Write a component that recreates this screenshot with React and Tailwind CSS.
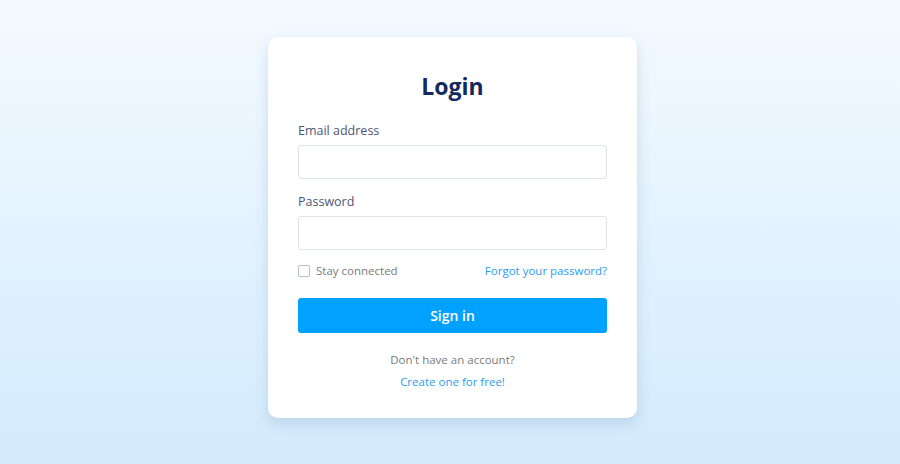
export default function App() {
  return (
    <div
      className="flex h-[464px] w-full items-start justify-center bg-gradient-to-b from-[#f4faff] to-[#d2ebfd] pt-[37px]"
      style={{ fontFamily: '"Open Sans", "Noto Sans", sans-serif' }}
    >
      {/* ─── CARD ─────────────────────────────── */}
      <div className="ml-[5px] flex h-[381px] w-[369px] flex-col rounded-[10px] bg-white px-[30px] pt-[32px] shadow-[0_6px_14px_rgba(120,150,180,0.28)]">
        <h1 className="text-center text-[23px] font-bold leading-[34px] text-[#14295e]">Login</h1>

        <label className="mt-[19px] text-[12.5px] leading-[18px] text-[#4c5676]">Email address</label>
        <input className="mt-[5px] h-[34px] w-full rounded-[3px] border border-[#dde3ea] px-3 text-[13px] outline-none" />

        <label className="mt-[14px] text-[12.5px] leading-[18px] text-[#4c5676]">Password</label>
        <input
          type="password"
          className="mt-[5px] h-[34px] w-full rounded-[3px] border border-[#dde3ea] px-3 text-[13px] outline-none"
        />

        <div className="mt-[13px] flex items-center justify-between">
          <label className="flex items-center gap-[6px] text-[11.5px] leading-[16px] text-[#7a7a7a]">
            <span className="inline-block h-[12px] w-[12px] rounded-[2px] border border-[#b9bfc7] bg-white" />
            Stay connected
          </label>
          <a className="cursor-pointer text-[11.5px] leading-[16px] text-[#2a9df0]">Forgot your password?</a>
        </div>

        <button className="mt-[19px] h-[35px] w-full rounded-[3px] bg-[#00a1ff] text-[14px] font-semibold text-white">
          Sign in
        </button>

        <p className="mt-[19px] text-center text-[11.5px] leading-[16px] text-[#7a7a7a]">Don't have an account?</p>
        <a className="mt-[6px] cursor-pointer text-center text-[11.5px] leading-[16px] text-[#2a9df0]">
          Create one for free!
        </a>
      </div>
    </div>
  );
}
